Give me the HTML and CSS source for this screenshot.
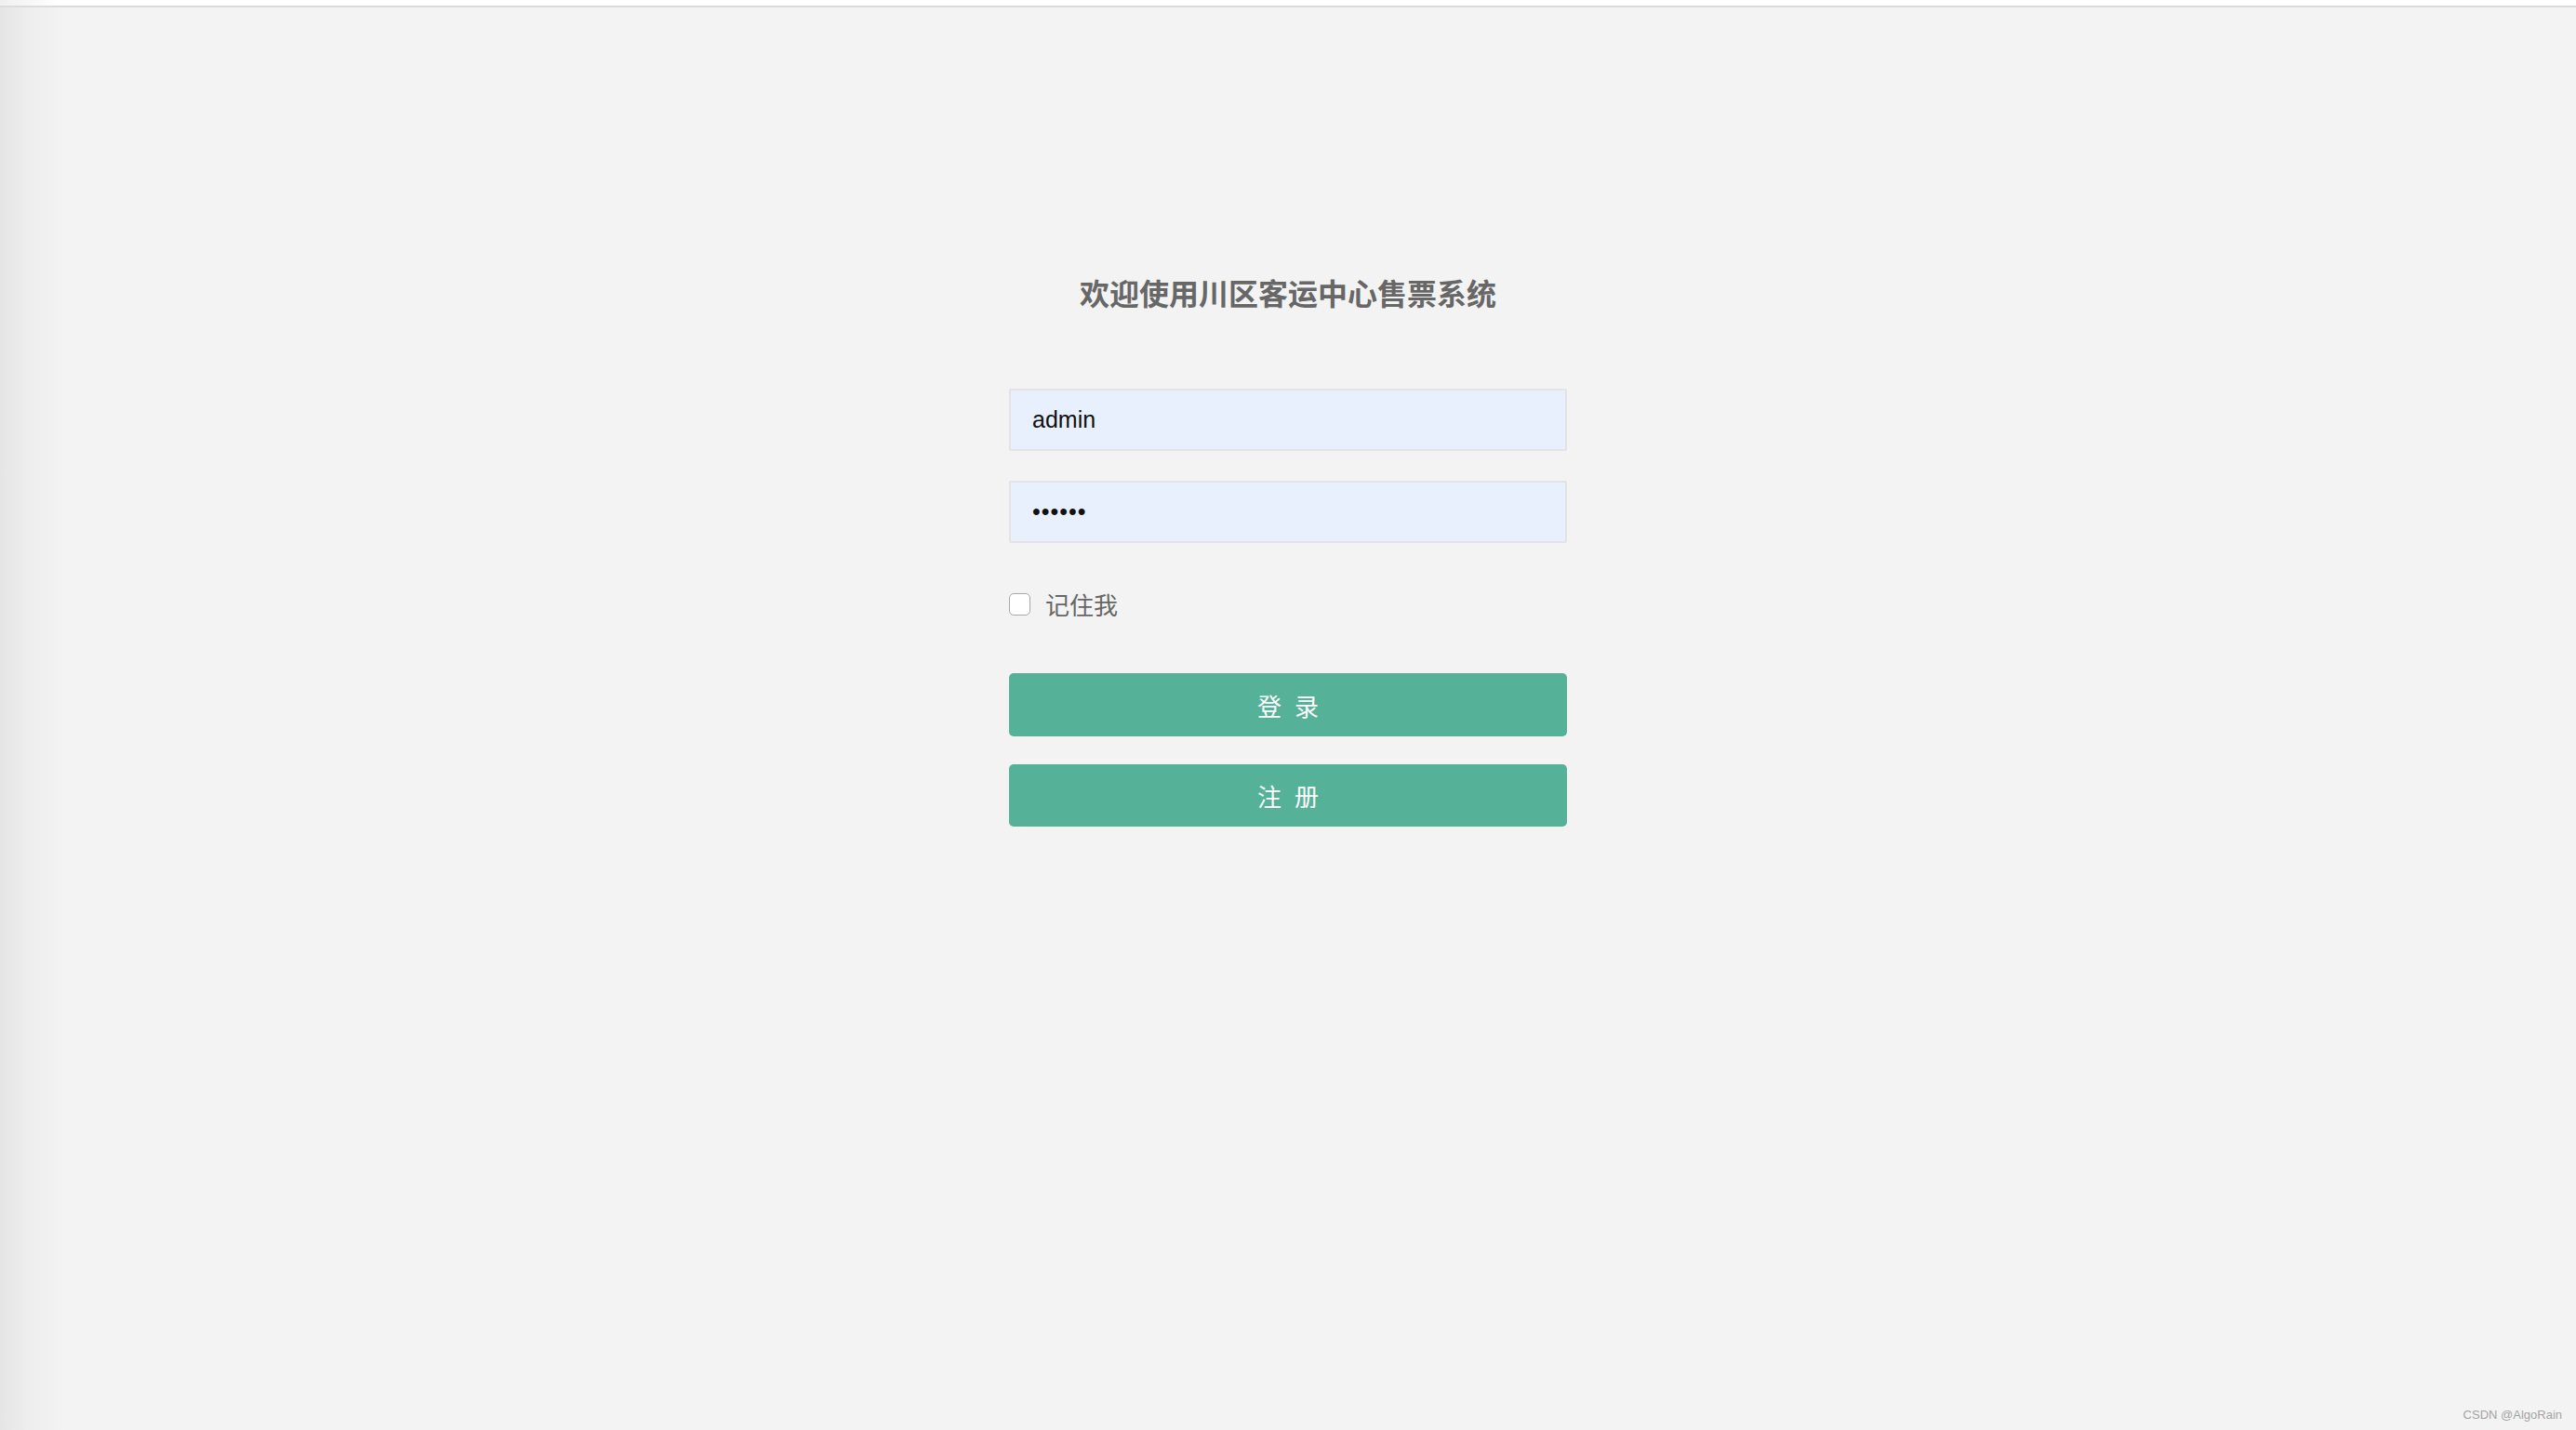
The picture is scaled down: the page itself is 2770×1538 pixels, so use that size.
FILE: index.html
```html
<!DOCTYPE html>
<html lang="zh-CN">
<head>
<meta charset="utf-8">
<title>欢迎使用川区客运中心售票系统</title>
<link rel="stylesheet" href="styles.css">
</head>
<body>
<div class="topbar"></div>
<main class="page">
  <form class="login" onsubmit="return false">
    <h1 class="title">欢迎使用川区客运中心售票系统</h1>
    <input class="field first" type="text" value="admin">
    <input class="field second" type="password" value="123456">
    <label class="remember">
      <input class="check" type="checkbox">
      <span class="remember-text">记住我</span>
    </label>
    <button class="btn btn-login" type="button">登 录</button>
    <button class="btn btn-register" type="button">注 册</button>
  </form>
</main>
<footer class="footer"><span class="mark">CSDN @AlgoRain</span></footer>
</body>
</html>
```

FILE: styles.css
```css
html, body {
  margin: 0;
  padding: 0;
  height: 100%;
}

body {
  display: flex;
  flex-direction: column;
  min-height: 100vh;
  background: linear-gradient(to right, #e5e5e5 0px, #eeeeee 30px, #f3f3f3 70px, #f3f3f3 100%);
  font-family: "Liberation Sans", "Noto Sans CJK SC", sans-serif;
  color: #666;
}

.topbar {
  height: 6px;
  background: linear-gradient(to right, #f0f0f0 0px, #ffffff 65px);
  border-bottom: 2px solid #dcdbe0;
  flex: 0 0 auto;
}

.page {
  flex: 1 1 auto;
  padding-top: 290px;
}

.login {
  width: 600px;
  margin: 0 auto;
  display: flex;
  flex-direction: column;
}

.title {
  margin: 0;
  text-align: center;
  font-family: "Noto Sans CJK SC", sans-serif;
  font-size: 32px;
  line-height: 32px;
  font-weight: 700;
  color: #676767;
}

.field {
  box-sizing: border-box;
  height: 67px;
  width: 100%;
  margin: 0;
  padding: 0 20px 0 23px;
  border: 2px solid #e3e3e3;
  border-radius: 2px;
  background: #e8f0fe;
  font-family: "Liberation Sans", "Noto Sans CJK SC", sans-serif;
  font-size: 25px;
  color: #111;
  outline: none;
}

.field.first {
  margin-top: 88px;
}

.field.second {
  margin-top: 32px;
  letter-spacing: 1px;
}

.remember {
  display: flex;
  align-items: center;
  gap: 16px;
  height: 24px;
  margin-top: 54px;
  cursor: pointer;
}

.check {
  appearance: none;
  -webkit-appearance: none;
  box-sizing: border-box;
  width: 23px;
  height: 24px;
  margin: 0;
  border: 1.5px solid #a9a9a9;
  border-radius: 5px;
  background: #ffffff;
}

.remember-text {
  font-family: "Noto Sans CJK SC", sans-serif;
  font-size: 26px;
  line-height: 24px;
  color: #666666;
}

.btn {
  box-sizing: border-box;
  width: 100%;
  height: 68px;
  margin: 0;
  border: none;
  border-radius: 5px;
  background: #55b198;
  color: #ffffff;
  font-family: "Noto Sans CJK SC", sans-serif;
  font-size: 26px;
  word-spacing: 8px;
  cursor: pointer;
}

.btn-login {
  margin-top: 62px;
}

.btn-register {
  margin-top: 30px;
  height: 67px;
}

.footer {
  flex: 0 0 auto;
  display: flex;
  justify-content: flex-end;
  padding: 0 15px 9px 0;
}

.mark {
  font-family: "Liberation Sans", sans-serif;
  font-size: 13px;
  line-height: 15px;
  color: #a3a3a3;
}
```
